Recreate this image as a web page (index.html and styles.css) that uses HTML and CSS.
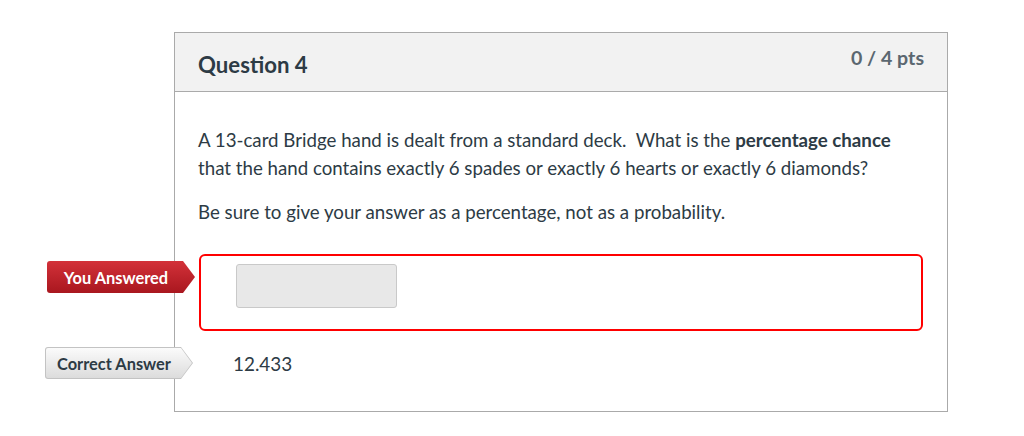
FILE: index.html
```html
<!DOCTYPE html>
<html>
<head>
<meta charset="utf-8">
<link rel="stylesheet" href="styles.css">
</head>
<body>
<div class="card">
  <div class="card-header">
    <div class="q-name">Question 4</div>
    <div class="q-pts">0 / 4 pts</div>
  </div>
  <div class="card-body">
    <p>A 13-card Bridge hand is dealt from a standard deck.&nbsp; What is the <strong>percentage chance</strong> that the hand contains exactly 6 spades or exactly 6 hearts or exactly 6 diamonds?</p>
    <p>Be sure to give your answer as a percentage, not as a probability.</p>
    <div class="answer-row wrong">
      <span class="tag tag-red">You Answered</span>
      <div class="answer-input"></div>
    </div>
    <div class="answer-row correct">
      <span class="tag tag-gray"><span class="tag-label">Correct Answer</span></span>
      <span class="answer-value">12.433</span>
    </div>
  </div>
</div>
</body>
</html>
```

FILE: styles.css
```css
html, body {
  margin: 0;
  padding: 0;
  background: #fff;
}
body {
  font-family: Lato, "Open Sans", sans-serif;
  color: #2d3b45;
}
.card {
  box-sizing: border-box;
  margin: 32px 0 0 174px;
  width: 774px;
  border: 1px solid #aaaaaa;
}
.card-header {
  box-sizing: border-box;
  height: 59px;
  background: #f2f2f2;
  border-bottom: 1px solid #aaaaaa;
  display: flex;
  justify-content: space-between;
  padding: 0 23px;
}
.q-name {
  font-size: 22.2px;
  font-weight: 700;
  margin-top: 18px;
  color: #2d3b45;
}
.q-pts {
  font-size: 19.6px;
  font-weight: 700;
  color: #5b6770;
  margin-top: 13px;
}
.card-body {
  padding: 34px 24px 32px 23px;
}
.card-body p {
  margin: 0 0 16px;
  font-size: 18.7px;
  line-height: 28px;
}
.answer-row {
  position: relative;
}
.wrong {
  margin-top: 28px;
  margin-left: 1px;
  box-sizing: border-box;
  height: 77px;
  border: 2px solid #ff0000;
  border-radius: 6px;
  padding: 8px 35px;
}
.answer-input {
  box-sizing: border-box;
  width: 161px;
  height: 44px;
  background: #e8e8e8;
  border: 1px solid #c9c9c9;
  border-radius: 3px;
}
.correct {
  margin-top: 16px;
  height: 32px;
  display: flex;
  align-items: center;
  padding-left: 35px;
}
.answer-value {
  font-size: 18.9px;
  color: #2d3b45;
}
.tag {
  position: absolute;
  box-sizing: border-box;
  width: 148px;
  height: 32px;
  display: flex;
  align-items: center;
  padding-left: 0;
  font-size: 16.4px;
  font-weight: 700;
  clip-path: polygon(0 0, 136px 0, 148px 50%, 136px 100%, 0 100%);
}
.tag-red {
  left: -154px;
  top: 5px;
  justify-content: center;
  padding-right: 10px;
  color: #fff;
  background: linear-gradient(#d33139, #a9171f);
  border-radius: 3px 0 0 3px;
}
.tag-gray {
  left: -153px;
  top: 0;
  background: #c3c3c3;
  border-radius: 3px 0 0 3px;
}
.tag-label {
  position: absolute;
  inset: 1px;
  display: flex;
  align-items: center;
  justify-content: center;
  padding-right: 10px;
  color: #2d3b45;
  background: linear-gradient(#fbfbfb, #dcdcdc);
  border-radius: 2px 0 0 2px;
  clip-path: polygon(0 0, 135px 0, 146px 50%, 135px 100%, 0 100%);
}
```
